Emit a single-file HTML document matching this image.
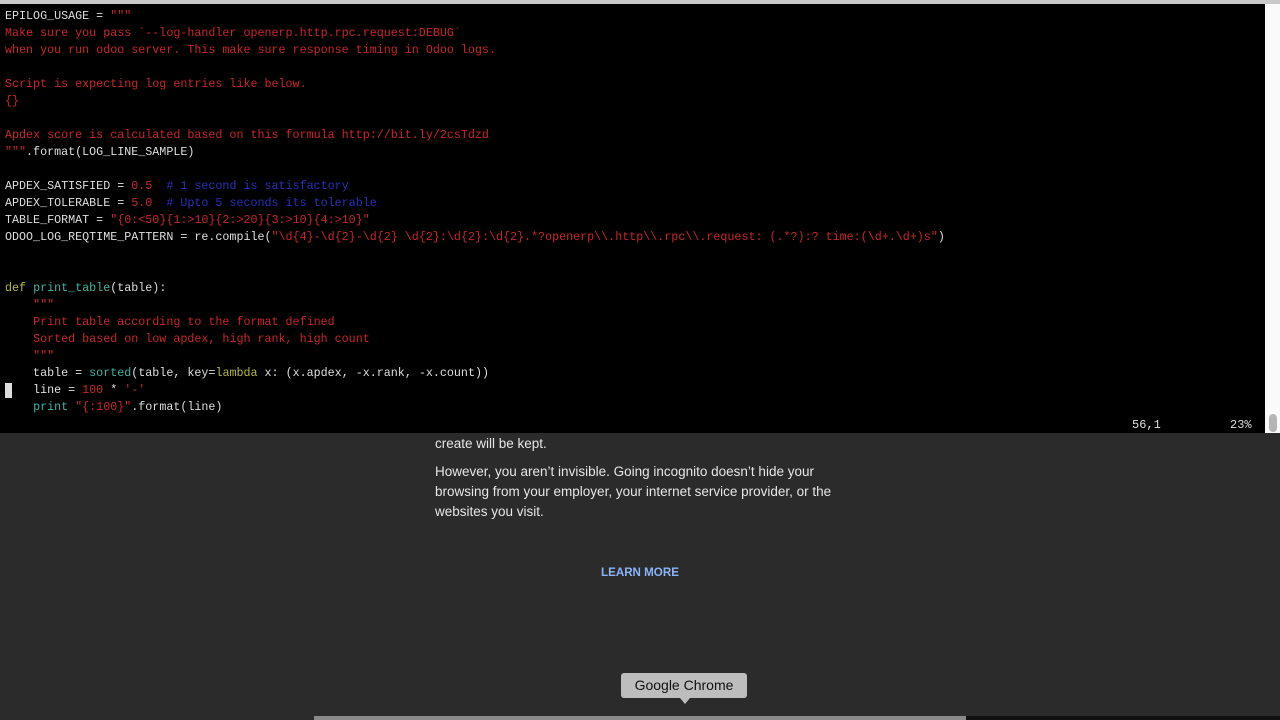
<!DOCTYPE html>
<html><head><meta charset="utf-8"><style>
body{margin:0;width:1280px;height:720px;background:#2b2b2b;overflow:hidden;position:relative;font-family:"Liberation Sans",sans-serif}
#top{position:absolute;left:0;top:0;width:1280px;height:4px;background:#c8c8c8}
#term{position:absolute;left:0;top:4px;width:1280px;height:429px;background:#000}
pre{position:absolute;left:5px;top:4px;margin:0;font-family:"Liberation Mono",monospace;font-size:11.7px;line-height:17px;color:#dedede}
.r{color:#c8262c}.b{color:#2a30b8}.y{color:#b4b83c}.c{color:#3bb3a3}
#cur{position:absolute;left:5px;top:379px;width:7px;height:15px;background:#ddd}
.st{position:absolute;top:414px;font-family:"Liberation Mono",monospace;font-size:12px;color:#ddd}
#sb{position:absolute;left:1265px;top:0;width:15px;height:429px;background:#fafafa}
#sbt{position:absolute;left:1269px;top:410px;width:8px;height:18px;border-radius:4px;background:#b5b5b5}
.p{position:absolute;left:435px;color:#e6e6e6;font-size:13.5px;line-height:20px}
#lm{position:absolute;left:601px;top:566px;color:#8ab4f8;font-size:11.6px;font-weight:bold}
#tip{position:absolute;left:621px;top:673px;width:126px;height:25px;background:#bdbdbd;border-radius:3px;color:#111;font-size:14px;text-align:center;line-height:25px}
#arr{position:absolute;left:680px;top:698px;width:0;height:0;border-left:5px solid transparent;border-right:5px solid transparent;border-top:6px solid #bdbdbd}
#bar{position:absolute;left:314px;top:716px;width:652px;height:4px;background:#8a8a8a}
#bar2{position:absolute;left:966px;top:716px;width:314px;height:4px;background:#111}
</style></head><body>
<div id="top"></div>
<div id="term">
<pre>EPILOG_USAGE = <span class="r">"""</span>
<span class="r">Make sure you pass `--log-handler openerp.http.rpc.request:DEBUG`</span>
<span class="r">when you run odoo server. This make sure response timing in Odoo logs.</span>

<span class="r">Script is expecting log entries like below.</span>
<span class="r">{}</span>

<span class="r">Apdex score is calculated based on this formula http://bit.ly/2csTdzd</span>
<span class="r">"""</span>.format(LOG_LINE_SAMPLE)

APDEX_SATISFIED = <span class="r">0.5</span>  <span class="b"># 1 second is satisfactory</span>
APDEX_TOLERABLE = <span class="r">5.0</span>  <span class="b"># Upto 5 seconds its tolerable</span>
TABLE_FORMAT = <span class="r">"{0:&lt;50}{1:&gt;10}{2:&gt;20}{3:&gt;10}{4:&gt;10}"</span>
ODOO_LOG_REQTIME_PATTERN = re.compile(<span class="r">"\d{4}-\d{2}-\d{2} \d{2}:\d{2}:\d{2}.*?openerp\\.http\\.rpc\\.request: (.*?):? time:(\d+.\d+)s"</span>)


<span class="y">def</span> <span class="c">print_table</span>(table):
    <span class="r">"""</span>
    <span class="r">Print table according to the format defined</span>
    <span class="r">Sorted based on low apdex, high rank, high count</span>
    <span class="r">"""</span>
    table = <span class="c">sorted</span>(table, key=<span class="y">lambda</span> x: (x.apdex, -x.rank, -x.count))
    line = <span class="r">100</span> * <span class="r">'-'</span>
    <span class="c">print</span> <span class="r">"{:100}"</span>.format(line)</pre>
<div id="cur"></div>
<div class="st" style="left:1132px">56,1</div>
<div class="st" style="left:1230px">23%</div>
<div id="sb"></div><div id="sbt"></div>
</div>
<div class="p" style="top:434px">create will be kept.</div>
<div class="p" style="top:462px">However, you aren’t invisible. Going incognito doesn’t hide your<br>browsing from your employer, your internet service provider, or the<br>websites you visit.</div>
<div id="lm">LEARN MORE</div>
<div id="tip">Google Chrome</div><div id="arr"></div>
<div id="bar"></div><div id="bar2"></div>
</body></html>
